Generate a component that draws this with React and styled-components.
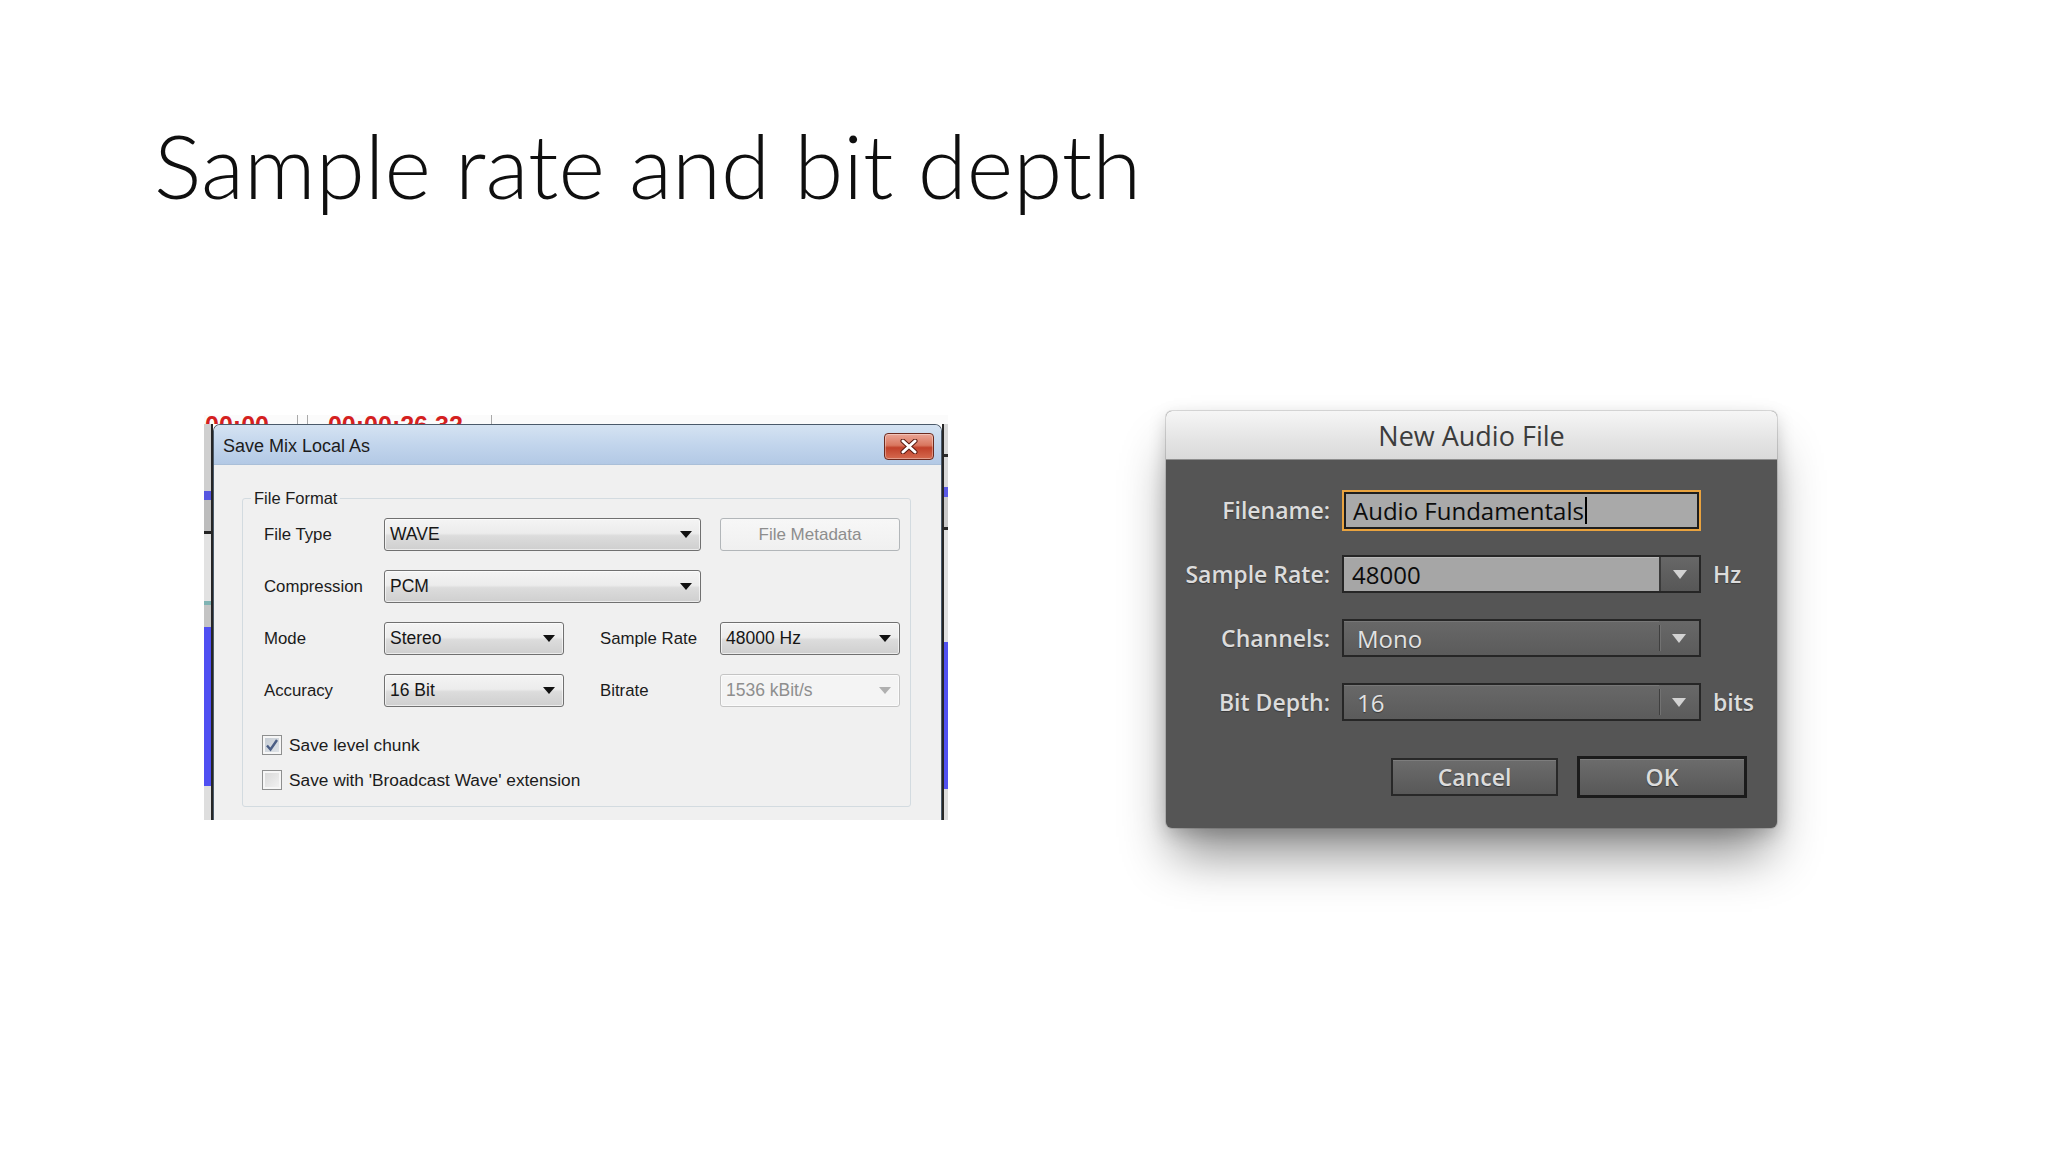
import React from "react";
import styled, { createGlobalStyle } from "styled-components";

const Global = createGlobalStyle`
  html, body { margin: 0; padding: 0; background: #ffffff; }
  body { width: 2048px; height: 1152px; overflow: hidden; }
  * { box-sizing: border-box; }
`;

const winFont = `"Liberation Sans", Arial, sans-serif`;

const Slide = styled.div`
  width: 2048px;
  height: 1152px;
  background: #ffffff;
  padding-top: 120px;
  display: flex;
  flex-direction: column;
`;

const Title = styled.h1`
  margin: 0;
  padding-left: 154px;
  font-family: Lato, "Open Sans", sans-serif;
  font-weight: 300;
  font-size: 89px;
  line-height: 89px;
  color: #0f0f0f;
`;

const Stage = styled.div`
  display: flex;
  align-items: flex-start;
  margin-top: 202px;
  padding-left: 204px;
  gap: 218px;
`;

/* ---------- Windows 7 screenshot ---------- */

const Shot = styled.div`
  width: 744px;
  height: 405px;
  margin-top: 4px;
  display: grid;
  grid-template-columns: 9px 729px 6px;
  grid-template-rows: 9px 396px;
  overflow: hidden;
  background: #ffffff;
`;

const TopStrip = styled.div`
  grid-column: 1 / 4;
  display: flex;
  align-items: flex-start;
  overflow: hidden;
  background: #fbfbfb;
`;

const TimeCode = styled.span`
  margin-left: ${(p) => p.$ml}px;
  margin-top: -2px;
  font-family: ${winFont};
  font-weight: 700;
  font-size: 25px;
  line-height: 1;
  color: #d42020;
  white-space: nowrap;
`;

const StripDivider = styled.span`
  margin-left: ${(p) => p.$ml}px;
  width: 1px;
  height: 9px;
  background: #a9a9a9;
  flex: none;
`;

const SideStrip = styled.div`
  display: flex;
  flex-direction: column;
  background: #d8d8d8;
  border-${(p) => p.$edge}: 2px solid #262626;
`;

const Seg = styled.div`
  flex: none;
  height: ${(p) => p.$h}px;
  background: ${(p) => p.$c};
`;

const Win = styled.div`
  display: flex;
  flex-direction: column;
  border: 1px solid #4b5a6a;
  border-bottom: none;
  border-radius: 7px 7px 0 0;
  overflow: hidden;
  background: #f0f0f0;
`;

const WinTitleBar = styled.div`
  height: 40px;
  flex: none;
  display: flex;
  align-items: center;
  justify-content: space-between;
  padding: 0 7px 0 9px;
  background: linear-gradient(#d5e3f2 0%, #c2d5ec 50%, #b3c9e5 100%);
  border-bottom: 1px solid #aabfd8;
`;

const WinTitle = styled.span`
  font-family: ${winFont};
  font-size: 18px;
  color: #1c1c1c;
  margin-top: 3px;
`;

const CloseBtn = styled.div`
  width: 50px;
  height: 27px;
  margin-top: 3px;
  border: 1px solid #6d2a1e;
  border-radius: 4px;
  background: linear-gradient(#eaa596 0%, #d9775f 45%, #c1412a 55%, #d56a4f 100%);
  display: flex;
  align-items: center;
  justify-content: center;
  box-shadow: inset 0 0 0 1px rgba(255, 255, 255, 0.35);
`;

const WinBody = styled.div`
  flex: 1;
  padding: 23px 30px 0 28px;
`;

const Group = styled.fieldset`
  margin: 0;
  border: 1px solid #d3dbe0;
  border-radius: 3px;
  padding: 10px 0 16px 0;
  min-width: 0;
`;

const Legend = styled.legend`
  margin-left: 8px;
  padding: 0 3px;
  font-family: ${winFont};
  font-size: 16.5px;
  line-height: 20px;
  color: #1c1c1c;
`;

const FormGrid = styled.div`
  display: grid;
  grid-template-columns: 120px 180px 156px 180px;
  grid-auto-rows: 33px;
  row-gap: 19px;
  padding-left: 21px;
`;

const WinLabel = styled.div`
  display: flex;
  align-items: center;
  padding-left: ${(p) => p.$pl || 0}px;
  font-family: ${winFont};
  font-size: 16.8px;
  color: #1b1b1b;
  white-space: nowrap;
`;

const Combo = styled.div`
  grid-column: ${(p) => p.$span || "auto"};
  margin-right: ${(p) => p.$mr || 0}px;
  display: flex;
  align-items: center;
  justify-content: space-between;
  padding: 0 8px 0 5px;
  border: 1px solid ${(p) => (p.$disabled ? "#c4c4c4" : "#707070")};
  border-radius: 3px;
  background: ${(p) =>
    p.$disabled
      ? "#f4f4f4"
      : "linear-gradient(#f4f4f4 0%, #ececec 46%, #dcdcdc 54%, #cfcfcf 100%)"};
  color: ${(p) => (p.$disabled ? "#8e8e8e" : "#161616")};
  font-family: ${winFont};
  font-size: 17.5px;
  white-space: nowrap;
  box-shadow: inset 0 0 0 1px rgba(255, 255, 255, 0.6);
`;

const WinArrow = styled.span`
  width: 0;
  height: 0;
  border-left: 6px solid transparent;
  border-right: 6px solid transparent;
  border-top: 7px solid ${(p) => (p.$disabled ? "#b0b0b0" : "#111111")};
`;

const WinButton = styled.div`
  display: flex;
  align-items: center;
  justify-content: center;
  border: 1px solid #b2b6b9;
  border-radius: 3px;
  background: linear-gradient(#f7f7f7, #f0f0f0);
  color: #8d8d8d;
  font-family: ${winFont};
  font-size: 17px;
`;

const CheckList = styled.div`
  display: flex;
  flex-direction: column;
  gap: 15px;
  margin-top: 28px;
  padding-left: 19px;
`;

const CheckRow = styled.div`
  display: flex;
  align-items: center;
  gap: 7px;
  height: 20px;
  font-family: ${winFont};
  font-size: 17.3px;
  color: #1b1b1b;
  white-space: nowrap;
`;

const CheckBox = styled.span`
  width: 20px;
  height: 20px;
  flex: none;
  border: 1px solid #8e8f8f;
  background: ${(p) =>
    p.$checked
      ? "linear-gradient(135deg, #c3cad2, #e2e6ea)"
      : "linear-gradient(135deg, #d6d6d6, #f4f4f4)"};
  box-shadow: inset 0 0 0 2px #f6f6f6;
  display: flex;
  align-items: center;
  justify-content: center;
`;

/* ---------- Mac dialog ---------- */

const MacDialog = styled.div`
  width: 611px;
  height: 417px;
  display: flex;
  flex-direction: column;
  border-radius: 6px;
  overflow: hidden;
  background: #555555;
  box-shadow: 0 34px 48px -8px rgba(0, 0, 0, 0.45), 0 6px 18px rgba(0, 0, 0, 0.18),
    0 0 0 1px rgba(0, 0, 0, 0.12);
`;

const MacTitleBar = styled.div`
  height: 49px;
  flex: none;
  display: flex;
  align-items: center;
  justify-content: center;
  background: linear-gradient(#f6f6f6, #e4e4e4 60%, #dadada);
  border-bottom: 1px solid #8f8f8f;
  font-family: "Open Sans", "DejaVu Sans", sans-serif;
  font-size: 27px;
  color: #3c3c3c;
`;

const MacBody = styled.div`
  flex: 1;
  padding-top: 31px;
  display: flex;
  flex-direction: column;
`;

const MacForm = styled.div`
  display: grid;
  grid-template-columns: 164px 359px auto;
  grid-auto-rows: 38px;
  column-gap: 12px;
  row-gap: 26px;
  align-items: center;
`;

const MacLabel = styled.div`
  text-align: ${(p) => (p.$left ? "left" : "right")};
  font-family: "Open Sans", "DejaVu Sans", sans-serif;
  font-weight: 600;
  font-size: 23px;
  color: #dcdcdc;
  text-shadow: 0 1px 1px rgba(0, 0, 0, 0.35);
  white-space: nowrap;
`;

const TextField = styled.div`
  height: 41px;
  border: 2px solid #e9a33f;
  background: #a9a9a9;
  box-shadow: inset 0 0 0 2px #1e1e1e;
  display: flex;
  align-items: center;
  padding-left: 9px;
  font-family: "Open Sans", "DejaVu Sans", sans-serif;
  font-size: 24px;
  color: #0c0c0c;
`;

const Caret = styled.span`
  width: 2px;
  height: 27px;
  background: #000;
  margin-left: 1px;
`;

const MacCombo = styled.div`
  height: 38px;
  display: flex;
  align-items: stretch;
  border: 2px solid #262626;
  background: ${(p) => (p.$editable ? "#a6a6a6" : "linear-gradient(#686868, #5b5b5b)")};
  font-family: "Open Sans", "DejaVu Sans", sans-serif;
  font-size: 24px;
  color: ${(p) => (p.$editable ? "#0c0c0c" : "#e2e2e2")};
`;

const MacComboText = styled.div`
  flex: 1;
  display: flex;
  align-items: center;
  padding-left: ${(p) => (p.$editable ? 8 : 13)}px;
  box-shadow: ${(p) =>
    p.$editable ? "inset 0 1px 0 #b9b9b9" : "inset 0 1px 0 rgba(255,255,255,0.1)"};
  text-shadow: ${(p) => (p.$editable ? "none" : "0 1px 1px rgba(0,0,0,0.4)")};
`;

const MacComboBtn = styled.div`
  width: 40px;
  flex: none;
  display: flex;
  align-items: center;
  justify-content: center;
  background: ${(p) => (p.$editable ? "linear-gradient(#676767, #575757)" : "transparent")};
  border-left: ${(p) => (p.$editable ? "2px solid #3a3a3a" : "none")};
  position: relative;
  &::before {
    content: "";
    display: ${(p) => (p.$editable ? "none" : "block")};
    position: absolute;
    left: 0;
    top: 4px;
    bottom: 4px;
    width: 1px;
    background: #3f3f3f;
    box-shadow: 1px 0 0 #727272;
  }
`;

const MacArrow = styled.span`
  width: 0;
  height: 0;
  border-left: 7px solid transparent;
  border-right: 7px solid transparent;
  border-top: 9px solid #d2d2d2;
`;

const ButtonRow = styled.div`
  display: flex;
  justify-content: flex-end;
  align-items: center;
  gap: 19px;
  padding-right: 30px;
  margin-top: 35px;
`;

const MacButton = styled.div`
  width: ${(p) => (p.$default ? 170 : 167)}px;
  height: ${(p) => (p.$default ? 42 : 38)}px;
  display: flex;
  align-items: center;
  justify-content: center;
  border: ${(p) => (p.$default ? 3 : 2)}px solid ${(p) => (p.$default ? "#1b1b1b" : "#282828")};
  background: linear-gradient(#6c6c6c, #585858);
  box-shadow: inset 0 1px 0 rgba(255, 255, 255, 0.12);
  font-family: "Open Sans", "DejaVu Sans", sans-serif;
  font-weight: 600;
  font-size: 23px;
  color: #dcdcdc;
  text-shadow: 0 1px 1px rgba(0, 0, 0, 0.4);
`;

const leftSegs = [
  [67, "#cfcfcf"],
  [9, "#5757e0"],
  [31, "#bdbdbd"],
  [3, "#232323"],
  [67, "#e2e2e2"],
  [4, "#7fb3b3"],
  [22, "#c4c4c4"],
  [159, "#4f4ff2"],
  [34, "#dedede"],
];

const rightSegs = [
  [30, "#d8d8d8"],
  [3, "#2a2a2a"],
  [30, "#d8d8d8"],
  [10, "#5a5ae6"],
  [30, "#c9c9c9"],
  [3, "#262626"],
  [112, "#e0e0e0"],
  [147, "#5252f0"],
  [31, "#dcdcdc"],
];

function WinCombo({ value, disabled, span, mr }) {
  return (
    <Combo $disabled={disabled} $span={span} $mr={mr}>
      <span>{value}</span>
      <WinArrow $disabled={disabled} />
    </Combo>
  );
}

function SaveMixShot() {
  return (
    <Shot>
      <TopStrip>
        <TimeCode $ml={1}>00:00</TimeCode>
        <StripDivider $ml={28} />
        <StripDivider $ml={9} />
        <TimeCode $ml={20}>00:00:26.32</TimeCode>
        <StripDivider $ml={28} />
      </TopStrip>
      <SideStrip $edge="right">
        {leftSegs.map(([h, c], i) => (
          <Seg key={i} $h={h} $c={c} />
        ))}
      </SideStrip>
      <Win>
        <WinTitleBar>
          <WinTitle>Save Mix Local As</WinTitle>
          <CloseBtn>
            <svg width="18" height="15" viewBox="0 0 18 15">
              <path
                d="M3 2 L15 13 M15 2 L3 13"
                stroke="#5a1a10"
                strokeWidth="5"
                strokeLinecap="round"
              />
              <path
                d="M3 2 L15 13 M15 2 L3 13"
                stroke="#ffffff"
                strokeWidth="3"
                strokeLinecap="round"
              />
            </svg>
          </CloseBtn>
        </WinTitleBar>
        <WinBody>
          <Group>
            <Legend>File Format</Legend>
            <FormGrid>
              <WinLabel>File Type</WinLabel>
              <WinCombo value="WAVE" span="2 / 4" mr={19} />
              <WinButton>File Metadata</WinButton>

              <WinLabel>Compression</WinLabel>
              <WinCombo value="PCM" span="2 / 4" mr={19} />
              <span />

              <WinLabel>Mode</WinLabel>
              <WinCombo value="Stereo" />
              <WinLabel $pl={36}>Sample Rate</WinLabel>
              <WinCombo value="48000 Hz" />

              <WinLabel>Accuracy</WinLabel>
              <WinCombo value="16 Bit" />
              <WinLabel $pl={36}>Bitrate</WinLabel>
              <WinCombo value="1536 kBit/s" disabled />
            </FormGrid>
            <CheckList>
              <CheckRow>
                <CheckBox $checked>
                  <svg width="14" height="14" viewBox="0 0 14 14">
                    <path
                      d="M2 7.5 L5.5 11.5 L12 2"
                      fill="none"
                      stroke="#4b5e85"
                      strokeWidth="2.4"
                    />
                  </svg>
                </CheckBox>
                Save level chunk
              </CheckRow>
              <CheckRow>
                <CheckBox />
                Save with 'Broadcast Wave' extension
              </CheckRow>
            </CheckList>
          </Group>
        </WinBody>
      </Win>
      <SideStrip $edge="left">
        {rightSegs.map(([h, c], i) => (
          <Seg key={i} $h={h} $c={c} />
        ))}
      </SideStrip>
    </Shot>
  );
}

function PopupCombo({ value, editable }) {
  return (
    <MacCombo $editable={editable}>
      <MacComboText $editable={editable}>{value}</MacComboText>
      <MacComboBtn $editable={editable}>
        <MacArrow />
      </MacComboBtn>
    </MacCombo>
  );
}

function NewAudioFile() {
  return (
    <MacDialog>
      <MacTitleBar>New Audio File</MacTitleBar>
      <MacBody>
        <MacForm>
          <MacLabel>Filename:</MacLabel>
          <TextField>
            Audio Fundamentals
            <Caret />
          </TextField>
          <span />

          <MacLabel>Sample Rate:</MacLabel>
          <PopupCombo value="48000" editable />
          <MacLabel $left>Hz</MacLabel>

          <MacLabel>Channels:</MacLabel>
          <PopupCombo value="Mono" />
          <span />

          <MacLabel>Bit Depth:</MacLabel>
          <PopupCombo value="16" />
          <MacLabel $left>bits</MacLabel>
        </MacForm>
        <ButtonRow>
          <MacButton>Cancel</MacButton>
          <MacButton $default>OK</MacButton>
        </ButtonRow>
      </MacBody>
    </MacDialog>
  );
}

export default function App() {
  return (
    <>
      <Global />
      <Slide>
        <Title>Sample rate and bit depth</Title>
        <Stage>
          <SaveMixShot />
          <NewAudioFile />
        </Stage>
      </Slide>
    </>
  );
}
